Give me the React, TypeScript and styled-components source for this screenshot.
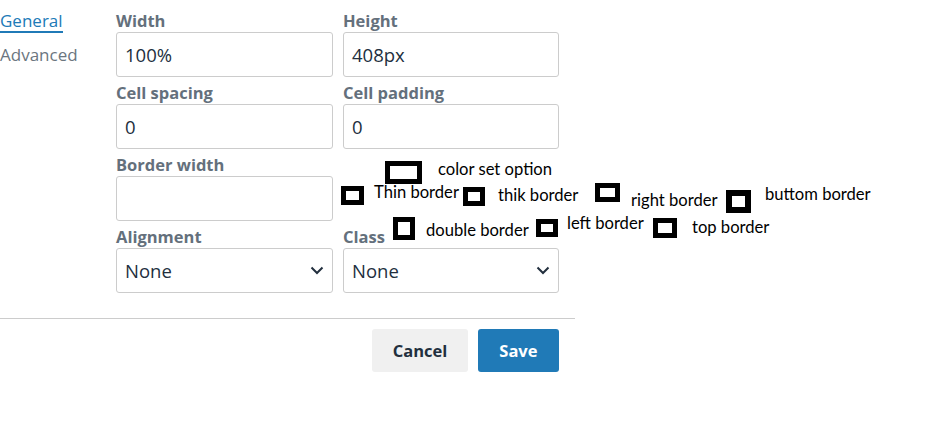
import React from "react";
import styled, { createGlobalStyle } from "styled-components";

const GlobalStyle = createGlobalStyle`
  html, body {
    margin: 0;
    padding: 0;
    background: #fff;
  }
  body {
    font-family: "Open Sans", "Noto Sans", sans-serif;
    color: #222f3e;
  }
`;

const Page = styled.div`
  position: relative;
  width: 933px;
  height: 439px;
  overflow: hidden;
`;

const Dialog = styled.div`
  width: 575px;
  display: flex;
  flex-direction: column;
`;

const Body = styled.div`
  display: flex;
  padding: 5px 16px 25px 0;
`;

const Tabs = styled.nav`
  width: 116px;
  padding-top: 6px;
  display: flex;
  flex-direction: column;
  gap: 12px;
`;

const Tab = styled.div<{ $active?: boolean }>`
  align-self: flex-start;
  font-size: 17px;
  line-height: 20px;
  color: ${p => (p.$active ? "#207ab7" : "#6b7680")};
  border-bottom: 2px solid ${p => (p.$active ? "#207ab7" : "transparent")};
`;

const Form = styled.div`
  display: grid;
  grid-template-columns: 217px 216px;
  column-gap: 10px;
`;

const Field = styled.div`
  display: flex;
  flex-direction: column;
`;

const Label = styled.label`
  font-size: 16.5px;
  font-weight: 700;
  line-height: 22px;
  margin-top: 5px;
  color: #64707c;
  white-space: nowrap;
`;

const Input = styled.div`
  box-sizing: border-box;
  height: 45px;
  border: 1px solid #cccccc;
  border-radius: 3px;
  padding: 0 8px;
  display: flex;
  align-items: center;
  justify-content: space-between;
  font-size: 18.5px;
  color: #222f3e;
`;

const Chevron = () => (
  <svg width="14" height="9" viewBox="0 0 14 9">
    <path d="M1.5 1.5 L7 7 L12.5 1.5" fill="none" stroke="#222f3e" strokeWidth="2" />
  </svg>
);

const Footer = styled.div`
  border-top: 1px solid #cccccc;
  display: flex;
  justify-content: flex-end;
  gap: 10px;
  padding: 10px 16px 0 0;
`;

const Button = styled.button<{ $primary?: boolean }>`
  height: 43px;
  padding: 0 ${p => (p.$primary ? "21.5px" : "20.5px")};
  border: none;
  border-radius: 3px;
  font-family: "Open Sans", "Noto Sans", sans-serif;
  font-size: 16.5px;
  font-weight: 700;
  background: ${p => (p.$primary ? "#207ab7" : "#f0f0f0")};
  color: ${p => (p.$primary ? "#ffffff" : "#222f3e")};
`;

/* the mockup drawn on top of the dialog */
const Patch = styled.div`
  position: absolute;
  left: 338px;
  top: 159px;
  width: 230px;
  height: 68px;
  background: #fff;
`;

const Swatch = styled.div<{ $b: number }>`
  position: absolute;
  box-sizing: border-box;
  background: #fff;
  border: ${p => p.$b}px solid #000;
`;

const Note = styled.span`
  position: absolute;
  font-family: "Lato", "Liberation Sans", sans-serif;
  font-size: 16.6px;
  line-height: 16px;
  color: #000;
  white-space: nowrap;
`;

const boxes = [
  { x: 385, y: 161, w: 37, h: 23, b: 5 },
  { x: 341, y: 186, w: 23, h: 19, b: 5 },
  { x: 463, y: 187, w: 22, h: 19, b: 5 },
  { x: 595, y: 183, w: 25, h: 19, b: 5 },
  { x: 726, y: 190, w: 25, h: 23, b: 6 },
  { x: 393, y: 217, w: 22, h: 23, b: 5 },
  { x: 536, y: 219, w: 22, h: 18, b: 5 },
  { x: 653, y: 218, w: 24, h: 20, b: 5 },
];

const notes = [
  { x: 438, base: 174, text: "color set option" },
  { x: 374, base: 197, text: "Thin border" },
  { x: 498, base: 200, text: "thik border" },
  { x: 631, base: 205, text: "right border" },
  { x: 765, base: 199, text: "buttom border" },
  { x: 426, base: 235, text: "double border" },
  { x: 567, base: 228, text: "left border" },
  { x: 692, base: 232, text: "top border" },
];

const fields = [
  { label: "Width", value: "100%" },
  { label: "Height", value: "408px" },
  { label: "Cell spacing", value: "0" },
  { label: "Cell padding", value: "0" },
  { label: "Border width", value: "" },
  { label: "Border color", value: "" },
  { label: "Alignment", value: "None", select: true },
  { label: "Class", value: "None", select: true },
];

export default function App() {
  return (
    <Page>
      <GlobalStyle />
      <Dialog>
        <Body>
          <Tabs>
            <Tab $active>General</Tab>
            <Tab>Advanced</Tab>
          </Tabs>
          <Form>
            {fields.map(f => (
              <Field key={f.label}>
                <Label>{f.label}</Label>
                <Input>
                  <span>{f.value}</span>
                  {f.select && <Chevron />}
                </Input>
              </Field>
            ))}
          </Form>
        </Body>
        <Footer>
          <Button>Cancel</Button>
          <Button $primary>Save</Button>
        </Footer>
      </Dialog>
      <Patch />
      {boxes.map((b, i) => (
        <Swatch
          key={i}
          $b={b.b}
          style={{ left: b.x, top: b.y, width: b.w, height: b.h }}
        />
      ))}
      {notes.map(n => (
        <Note key={n.text} style={{ left: n.x, top: n.base - 13 }}>
          {n.text}
        </Note>
      ))}
    </Page>
  );
}
